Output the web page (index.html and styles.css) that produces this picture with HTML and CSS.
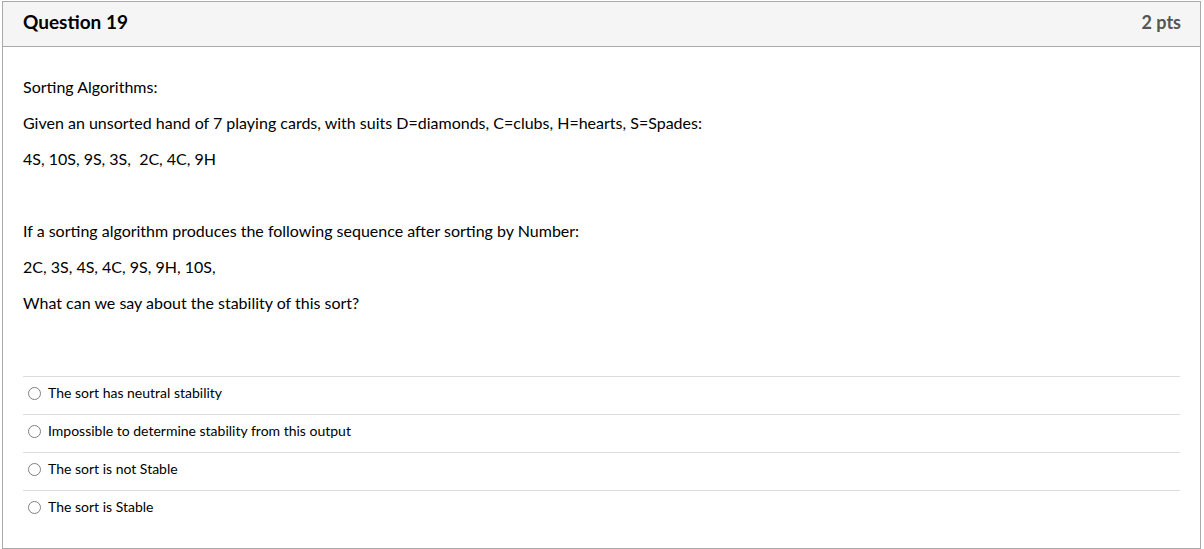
FILE: index.html
```html
<!DOCTYPE html>
<html>
<head>
<meta charset="utf-8">
<link rel="stylesheet" href="styles.css">
</head>
<body>
<div class="quiz">
  <div class="header">
    <span class="title">Question 19</span>
    <span class="pts">2 pts</span>
  </div>
  <div class="content">
    <div class="text">
      <p>Sorting Algorithms:</p>
      <p>Given an unsorted hand of 7 playing cards, with suits D=diamonds, C=clubs, H=hearts, S=Spades:</p>
      <p>4S, 10S, 9S, 3S,&nbsp; 2C, 4C, 9H</p>
      <p>&nbsp;</p>
      <p>If a sorting algorithm produces the following sequence after sorting by Number:</p>
      <p>2C, 3S, 4S, 4C, 9S, 9H, 10S,</p>
      <p>What can we say about the stability of this sort?</p>
    </div>
    <div class="answers">
      <label class="answer"><span class="radio"></span>The sort has neutral stability</label>
      <label class="answer"><span class="radio"></span>Impossible to determine stability from this output</label>
      <label class="answer"><span class="radio"></span>The sort is not Stable</label>
      <label class="answer"><span class="radio"></span>The sort is Stable</label>
    </div>
  </div>
</div>
</body>
</html>
```
FILE: styles.css
```css
html, body {
  margin: 0;
  padding: 0;
  background: #fff;
}
body {
  font-family: Lato, "Open Sans", sans-serif;
  color: #2d3b45;
}
.quiz {
  box-sizing: border-box;
  margin: 1px 0 0 2px;
  width: 1199px;
  height: 548px;
  border: 1px solid #aaaaaa;
}
.header {
  box-sizing: border-box;
  height: 45px;
  background: #f5f5f5;
  border-bottom: 1px solid #aaaaaa;
  display: flex;
  align-items: baseline;
  justify-content: space-between;
  padding: 8px 19px 0 20px;
}
.title {
  font-size: 19px;
  line-height: 23px;
  font-weight: bold;
  color: #000;
}
.pts {
  font-size: 18px;
  line-height: 22px;
  font-weight: bold;
  color: #555;
}
.content {
  padding: 29px 20px 0 20px;
}
.text p {
  margin: 0 0 15px 0;
  font-size: 16px;
  line-height: 21px;
  color: #000;
}
.answers {
  margin-top: 63px;
}
.answer {
  box-sizing: border-box;
  display: flex;
  align-items: flex-start;
  height: 38px;
  padding-top: 7px;
  line-height: 18px;
  border-top: 1px solid #dddddd;
  font-size: 14px;
  color: #000;
}
.radio {
  box-sizing: border-box;
  width: 13px;
  height: 13px;
  border: 1px solid #808080;
  border-radius: 50%;
  margin: 3px 7px 0 5px;
}
```
